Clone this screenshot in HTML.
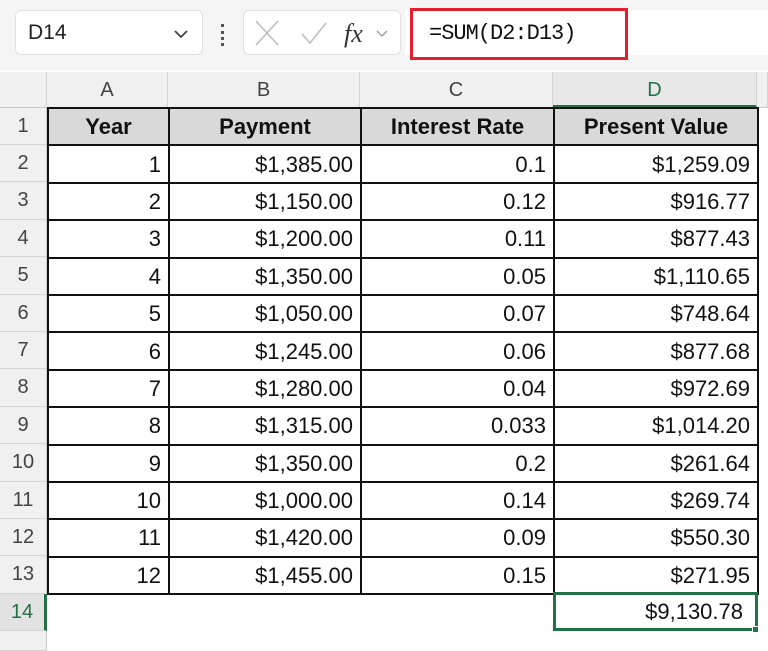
<!DOCTYPE html>
<html><head><style>
*{margin:0;padding:0;box-sizing:border-box}
body{width:768px;height:643px;overflow:hidden;background:#fff;font-family:"Liberation Sans Narrow","Liberation Sans",sans-serif;position:relative}
.top{position:absolute;left:0;top:0;width:768px;height:70px;background:#f5f5f5}
.box{position:absolute;background:#fff;border:1px solid #e0e0e0;border-radius:6px}
.ch{position:absolute;top:72px;height:36px;background:#f0f0f0;color:#444;font-size:20px;text-align:center;line-height:36px;border-right:1px solid #d4d4d4;border-bottom:1px solid #c8c8c8}
.rh{position:absolute;left:0;width:47px;background:#f0f0f0;color:#444;font-size:20px;text-align:center;border-bottom:1px solid #d4d4d4;border-right:1px solid #c8c8c8}
table{position:absolute;left:47px;top:107px;border-collapse:collapse;font-size:22px;color:#111}
td{border:2px solid #111;height:37.4px;padding:0 7px;text-align:right;line-height:33px}
tr.h td{background:#d9d9d9;font-weight:bold;text-align:center}
</style></head><body>
<div class="top"></div>
<div class="box" style="left:15px;top:10px;width:188px;height:45px"></div>
<div style="position:absolute;left:28px;top:21px;font-size:21px;color:#222">D14</div>
<svg style="position:absolute;left:173px;top:29px" width="16" height="10"><path d="M2 2 L8 8 L14 2" stroke="#444" stroke-width="1.8" fill="none"/></svg>
<div style="position:absolute;left:221px;top:24px;width:3px;height:22px;border-left:3px dotted #555"></div>
<div class="box" style="left:243px;top:10px;width:158px;height:45px"></div>
<svg style="position:absolute;left:252px;top:18px" width="150" height="30"><path d="M4 3 L26 27 M26 3 L4 27" stroke="#bbb" stroke-width="1.5"/><path d="M50 16 L58 25 L74 5" stroke="#bbb" stroke-width="1.5" fill="none"/><text x="92" y="24" font-family="Liberation Serif" font-style="italic" font-size="26" fill="#333">fx</text><path d="M125 13 L130 18 L135 13" stroke="#999" stroke-width="1.3" fill="none"/></svg>
<div style="position:absolute;left:405px;top:10px;width:363px;height:45px;background:#fff"></div>
<div style="position:absolute;left:410px;top:8px;width:218px;height:52px;border:3px solid #e0202a;background:#fff"></div>
<div style="position:absolute;left:429px;top:21px;font-family:'Liberation Mono',monospace;font-size:22px;color:#111;letter-spacing:-1px">=SUM(D2:D13)</div>
<div class="ch" style="left:0;width:47px;background:#f0f0f0"></div>
<div class="ch" style="left:47px;width:121px">A</div>
<div class="ch" style="left:168px;width:192px">B</div>
<div class="ch" style="left:360px;width:193px">C</div>
<div class="ch" style="left:553px;width:204px;color:#217346;border-bottom:3px solid #217346;background:#e8e8e8">D</div>
<div class="ch" style="left:757px;width:11px"></div>
<div class="rh" style="top:108px;height:37px;line-height:37px">1</div>
<div class="rh" style="top:145px;height:37.4px;line-height:37px">2</div>
<div class="rh" style="top:182.4px;height:37.4px;line-height:37px">3</div>
<div class="rh" style="top:219.8px;height:37.4px;line-height:37px">4</div>
<div class="rh" style="top:257.2px;height:37.4px;line-height:37px">5</div>
<div class="rh" style="top:294.6px;height:37.4px;line-height:37px">6</div>
<div class="rh" style="top:332px;height:37.4px;line-height:37px">7</div>
<div class="rh" style="top:369.4px;height:37.4px;line-height:37px">8</div>
<div class="rh" style="top:406.8px;height:37.4px;line-height:37px">9</div>
<div class="rh" style="top:444.2px;height:37.4px;line-height:37px">10</div>
<div class="rh" style="top:481.6px;height:37.4px;line-height:37px">11</div>
<div class="rh" style="top:519px;height:37.4px;line-height:37px">12</div>
<div class="rh" style="top:556.4px;height:37.4px;line-height:37px">13</div>
<div class="rh" style="top:593.8px;height:37px;line-height:37px;color:#217346;background:#e2e2e2;border-right:3px solid #217346">14</div>
<div class="rh" style="top:631px;height:20px;line-height:37px"></div>
<table>
<colgroup><col style="width:121px"><col style="width:192px"><col style="width:193px"><col style="width:204px"></colgroup>
<tr class="h"><td>Year</td><td>Payment</td><td>Interest Rate</td><td>Present Value</td></tr>
<tr><td>1</td><td>$1,385.00</td><td>0.1</td><td>$1,259.09</td></tr>
<tr><td>2</td><td>$1,150.00</td><td>0.12</td><td>$916.77</td></tr>
<tr><td>3</td><td>$1,200.00</td><td>0.11</td><td>$877.43</td></tr>
<tr><td>4</td><td>$1,350.00</td><td>0.05</td><td>$1,110.65</td></tr>
<tr><td>5</td><td>$1,050.00</td><td>0.07</td><td>$748.64</td></tr>
<tr><td>6</td><td>$1,245.00</td><td>0.06</td><td>$877.68</td></tr>
<tr><td>7</td><td>$1,280.00</td><td>0.04</td><td>$972.69</td></tr>
<tr><td>8</td><td>$1,315.00</td><td>0.033</td><td>$1,014.20</td></tr>
<tr><td>9</td><td>$1,350.00</td><td>0.2</td><td>$261.64</td></tr>
<tr><td>10</td><td>$1,000.00</td><td>0.14</td><td>$269.74</td></tr>
<tr><td>11</td><td>$1,420.00</td><td>0.09</td><td>$550.30</td></tr>
<tr><td>12</td><td>$1,455.00</td><td>0.15</td><td>$271.95</td></tr>
</table>
<div style="position:absolute;left:553px;top:592px;width:205px;height:39px;border:3px solid #217346;font-size:22px;text-align:right;padding-right:12px;line-height:33px;color:#111">$9,130.78</div>
<div style="position:absolute;left:752px;top:626px;width:7px;height:7px;background:#217346;border:1px solid #fff"></div>
</body></html>
